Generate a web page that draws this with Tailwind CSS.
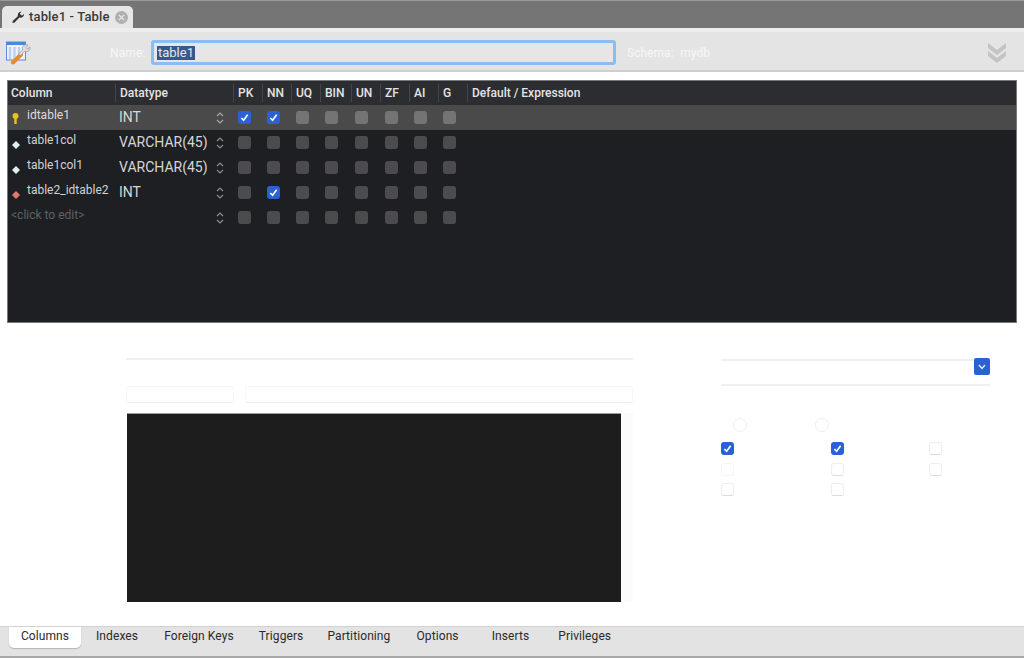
<!DOCTYPE html>
<html lang="en">
<head>
<meta charset="UTF-8">
<title>table1 - Table</title>
<script src="https://cdn.jsdelivr.net/npm/@tailwindcss/browser@4"></script>
</head>
<body class="bg-white font-['Roboto',sans-serif] w-[1024px] h-[658px] overflow-hidden">

<!-- tab bar -->
<div class="h-[28px] bg-[#757575] border-t border-[#9a9a9a] pl-[2px] pt-[5px]">
  <div class="w-[131px] h-[22px] bg-[#e6e6e6] rounded-t-[5px] flex items-center pl-[9px] text-[13px] font-medium tracking-[0.15px] text-[#3a3a3a]">
    <svg class="w-[14px] h-[14px] mr-[4px]" viewBox="0 0 16 16"><path d="M1.5 14.5 L2 12.5 L8 6.8 C7.5 4.5 8.5 2 12 1.6 L10.2 4 L11 5.8 L13 6.4 L15 4.2 C15 7.5 12.2 9.4 9.6 8.6 L3.8 14.6 Z" fill="#333"/></svg>
    <span>table1 - Table</span>
    <span class="ml-[5px] w-[13px] h-[13px] rounded-full bg-[#b0b0b0] flex items-center justify-center">
      <svg class="w-[7px] h-[7px]" viewBox="0 0 8 8"><path d="M1 1 L7 7 M7 1 L1 7" stroke="#e6e6e6" stroke-width="1.6"/></svg>
    </span>
  </div>
</div>

<!-- name toolbar -->
<div class="h-[44px] bg-[#e4e4e4] border-t-[4px] border-t-[#ededed] border-b-2 border-b-[#cfcfcf] pt-[3px] flex items-center relative">
  <svg class="ml-[6px] w-[25px] h-[24px]" viewBox="0 0 25 24">
    <rect x="0.5" y="1" width="19" height="18" fill="#eef2fb" stroke="#5b8ad6"/>
    <rect x="0.5" y="1" width="19" height="3" fill="#4f86dc"/>
    <path d="M4 6 V18 M8.5 6 V18 M13 6 V18" stroke="#bccfef" stroke-width="2.4"/>
    <path d="M7 21.5 L15 13.5" stroke="#ea8a2a" stroke-width="4" stroke-linecap="round"/>
    <path d="M14 15 L18.5 10.5 A4 4 0 0 0 24 6 L21.5 8 L20 6.5 L22 4 A4 4 0 0 0 16.5 9 L12.5 13 Z" fill="#dcdcdc" stroke="#8a8a8a" stroke-width="0.6"/>
  </svg>
  <span class="ml-[79px] w-[36px] text-[12px] tracking-[0.1px] text-[#f7f7f7]">Name:</span>
  <div class="ml-[5px] w-[465px] h-[25px] border-[3px] border-[#8cbdf0] rounded-[3px] bg-[#e6e6e6] flex items-center pl-[3px]">
    <span class="bg-[#35598c] text-[#e4e8ee] text-[13px] leading-[14px] px-[1px]">table1</span>
  </div>
  <span class="ml-[11px] text-[12px] text-[#f7f7f7]">Schema:</span>
  <span class="ml-[7px] text-[12px] text-[#f7f7f7]">mydb</span>
  <svg class="absolute right-[17px] top-[9px] w-[20px] h-[23px]" viewBox="0 0 20 23"><path d="M1 2 L10 9 L19 2 V7 L10 14 L1 7 Z M1 10 L10 17 L19 10 V15 L10 22 L1 15 Z" fill="#c4c4c4"/></svg>
</div>

<!-- columns table -->
<div class="mt-[8px] ml-[7px] w-[1010px] h-[243px] bg-[#1e1f23] border border-[#77787a] text-[#d6d6d6]">
  <div class="h-[24px] bg-[#2c2d30] flex items-center text-[12px] font-medium text-[#e4e4e4]">
    <div class="w-[107px] pl-[3px]">Column</div>
    <div class="w-[118px] pl-[4px] border-l border-[#44454a]">Datatype</div>
    <div class="w-[29px] pl-[4px] border-l border-[#44454a]">PK</div>
    <div class="w-[29px] pl-[4px] border-l border-[#44454a]">NN</div>
    <div class="w-[29px] pl-[4px] border-l border-[#44454a]">UQ</div>
    <div class="w-[31px] pl-[4px] border-l border-[#44454a]">BIN</div>
    <div class="w-[29px] pl-[4px] border-l border-[#44454a]">UN</div>
    <div class="w-[29px] pl-[4px] border-l border-[#44454a]">ZF</div>
    <div class="w-[29px] pl-[4px] border-l border-[#44454a]">AI</div>
    <div class="w-[29px] pl-[4px] border-l border-[#44454a]">G</div>
    <div class="pl-[4px] border-l border-[#44454a]">Default / Expression</div>
  </div>

  <!-- idtable1 -->
  <div class="h-[25px] bg-[#4a4a4a] flex items-center">
    <div class="w-[107px] flex items-center pl-[4px]">
      <svg class="w-[7px] h-[11px] mt-[2px]" viewBox="0 0 7 11"><circle cx="3.5" cy="3" r="3" fill="#e8c31e"/><rect x="2.3" y="4" width="2.4" height="7" fill="#e8c31e"/></svg>
      <span class="ml-[8px] -mt-[5px] text-[12px] text-[#dcdcdc]">idtable1</span>
    </div>
    <div class="w-[118px] flex items-center justify-between pl-[4px] pr-[9px] text-[14px]"><span class="-mt-[1px]">INT</span>
      <svg class="w-[8px] h-[12px]" viewBox="0 0 8 12"><path d="M1 4 L4 1 L7 4 M1 8 L4 11 L7 8" fill="none" stroke="#a8a8a8" stroke-width="1.2"/></svg>
    </div>
    <div class="w-[29px] pl-[5px]"><span class="w-[13px] h-[13px] rounded-[3px] bg-[#2a62d6] flex items-center justify-center"><svg class="w-[9px] h-[9px]" viewBox="0 0 10 10"><path d="M1.5 5.5 L4 8 L8.5 2" fill="none" stroke="#fff" stroke-width="1.8"/></svg></span></div>
    <div class="w-[29px] pl-[5px]"><span class="w-[13px] h-[13px] rounded-[3px] bg-[#2a62d6] flex items-center justify-center"><svg class="w-[9px] h-[9px]" viewBox="0 0 10 10"><path d="M1.5 5.5 L4 8 L8.5 2" fill="none" stroke="#fff" stroke-width="1.8"/></svg></span></div>
    <div class="w-[29px] pl-[5px]"><span class="block w-[13px] h-[13px] rounded-[3px] bg-[#747474]"></span></div>
    <div class="w-[30px] pl-[5px]"><span class="block w-[13px] h-[13px] rounded-[3px] bg-[#747474]"></span></div>
    <div class="w-[29px] pl-[5px]"><span class="block w-[13px] h-[13px] rounded-[3px] bg-[#747474]"></span></div>
    <div class="w-[29px] pl-[6px]"><span class="block w-[13px] h-[13px] rounded-[3px] bg-[#747474]"></span></div>
    <div class="w-[29px] pl-[6px]"><span class="block w-[13px] h-[13px] rounded-[3px] bg-[#747474]"></span></div>
    <div class="w-[29px] pl-[6px]"><span class="block w-[13px] h-[13px] rounded-[3px] bg-[#747474]"></span></div>
  </div>

  <!-- table1col -->
  <div class="h-[25px] flex items-center">
    <div class="w-[107px] flex items-center pl-[4px]">
      <svg class="w-[8px] h-[8px] mt-[4px]" viewBox="0 0 8 8"><path d="M4 0 L8 4 L4 8 L0 4 Z" fill="#dff2f0"/></svg>
      <span class="ml-[7px] -mt-[5px] text-[12px] text-[#d2d2d2]">table1col</span>
    </div>
    <div class="w-[118px] flex items-center justify-between pl-[4px] pr-[9px] text-[14px]"><span class="-mt-[1px]">VARCHAR(45)</span>
      <svg class="w-[8px] h-[12px]" viewBox="0 0 8 12"><path d="M1 4 L4 1 L7 4 M1 8 L4 11 L7 8" fill="none" stroke="#8e8e8e" stroke-width="1.2"/></svg>
    </div>
    <div class="w-[29px] pl-[5px]"><span class="block w-[13px] h-[13px] rounded-[3px] bg-[#4c4c4e]"></span></div>
    <div class="w-[29px] pl-[5px]"><span class="block w-[13px] h-[13px] rounded-[3px] bg-[#4c4c4e]"></span></div>
    <div class="w-[29px] pl-[5px]"><span class="block w-[13px] h-[13px] rounded-[3px] bg-[#4c4c4e]"></span></div>
    <div class="w-[30px] pl-[5px]"><span class="block w-[13px] h-[13px] rounded-[3px] bg-[#4c4c4e]"></span></div>
    <div class="w-[29px] pl-[5px]"><span class="block w-[13px] h-[13px] rounded-[3px] bg-[#4c4c4e]"></span></div>
    <div class="w-[29px] pl-[6px]"><span class="block w-[13px] h-[13px] rounded-[3px] bg-[#4c4c4e]"></span></div>
    <div class="w-[29px] pl-[6px]"><span class="block w-[13px] h-[13px] rounded-[3px] bg-[#4c4c4e]"></span></div>
    <div class="w-[29px] pl-[6px]"><span class="block w-[13px] h-[13px] rounded-[3px] bg-[#4c4c4e]"></span></div>
  </div>

  <!-- table1col1 -->
  <div class="h-[25px] flex items-center">
    <div class="w-[107px] flex items-center pl-[4px]">
      <svg class="w-[8px] h-[8px] mt-[4px]" viewBox="0 0 8 8"><path d="M4 0 L8 4 L4 8 L0 4 Z" fill="#dff2f0"/></svg>
      <span class="ml-[7px] -mt-[5px] text-[12px] text-[#d2d2d2]">table1col1</span>
    </div>
    <div class="w-[118px] flex items-center justify-between pl-[4px] pr-[9px] text-[14px]"><span class="-mt-[1px]">VARCHAR(45)</span>
      <svg class="w-[8px] h-[12px]" viewBox="0 0 8 12"><path d="M1 4 L4 1 L7 4 M1 8 L4 11 L7 8" fill="none" stroke="#8e8e8e" stroke-width="1.2"/></svg>
    </div>
    <div class="w-[29px] pl-[5px]"><span class="block w-[13px] h-[13px] rounded-[3px] bg-[#4c4c4e]"></span></div>
    <div class="w-[29px] pl-[5px]"><span class="block w-[13px] h-[13px] rounded-[3px] bg-[#4c4c4e]"></span></div>
    <div class="w-[29px] pl-[5px]"><span class="block w-[13px] h-[13px] rounded-[3px] bg-[#4c4c4e]"></span></div>
    <div class="w-[30px] pl-[5px]"><span class="block w-[13px] h-[13px] rounded-[3px] bg-[#4c4c4e]"></span></div>
    <div class="w-[29px] pl-[5px]"><span class="block w-[13px] h-[13px] rounded-[3px] bg-[#4c4c4e]"></span></div>
    <div class="w-[29px] pl-[6px]"><span class="block w-[13px] h-[13px] rounded-[3px] bg-[#4c4c4e]"></span></div>
    <div class="w-[29px] pl-[6px]"><span class="block w-[13px] h-[13px] rounded-[3px] bg-[#4c4c4e]"></span></div>
    <div class="w-[29px] pl-[6px]"><span class="block w-[13px] h-[13px] rounded-[3px] bg-[#4c4c4e]"></span></div>
  </div>

  <!-- table2_idtable2 -->
  <div class="h-[25px] flex items-center">
    <div class="w-[107px] flex items-center pl-[4px] whitespace-nowrap">
      <svg class="w-[8px] h-[8px] mt-[4px] shrink-0" viewBox="0 0 8 8"><path d="M4 0 L8 4 L4 8 L0 4 Z" fill="#e07a70"/></svg>
      <span class="ml-[7px] -mt-[5px] text-[12px] text-[#d2d2d2]">table2_idtable2</span>
    </div>
    <div class="w-[118px] flex items-center justify-between pl-[4px] pr-[9px] text-[14px]"><span class="-mt-[1px]">INT</span>
      <svg class="w-[8px] h-[12px]" viewBox="0 0 8 12"><path d="M1 4 L4 1 L7 4 M1 8 L4 11 L7 8" fill="none" stroke="#8e8e8e" stroke-width="1.2"/></svg>
    </div>
    <div class="w-[29px] pl-[5px]"><span class="block w-[13px] h-[13px] rounded-[3px] bg-[#4c4c4e]"></span></div>
    <div class="w-[29px] pl-[5px]"><span class="w-[13px] h-[13px] rounded-[3px] bg-[#2a62d6] flex items-center justify-center"><svg class="w-[9px] h-[9px]" viewBox="0 0 10 10"><path d="M1.5 5.5 L4 8 L8.5 2" fill="none" stroke="#fff" stroke-width="1.8"/></svg></span></div>
    <div class="w-[29px] pl-[5px]"><span class="block w-[13px] h-[13px] rounded-[3px] bg-[#4c4c4e]"></span></div>
    <div class="w-[30px] pl-[5px]"><span class="block w-[13px] h-[13px] rounded-[3px] bg-[#4c4c4e]"></span></div>
    <div class="w-[29px] pl-[5px]"><span class="block w-[13px] h-[13px] rounded-[3px] bg-[#4c4c4e]"></span></div>
    <div class="w-[29px] pl-[6px]"><span class="block w-[13px] h-[13px] rounded-[3px] bg-[#4c4c4e]"></span></div>
    <div class="w-[29px] pl-[6px]"><span class="block w-[13px] h-[13px] rounded-[3px] bg-[#4c4c4e]"></span></div>
    <div class="w-[29px] pl-[6px]"><span class="block w-[13px] h-[13px] rounded-[3px] bg-[#4c4c4e]"></span></div>
  </div>

  <!-- click to edit -->
  <div class="h-[25px] flex items-center">
    <div class="w-[107px] pl-[3px]"><span class="block -mt-[5px] text-[12px] text-[#606060]">&lt;click to edit&gt;</span></div>
    <div class="w-[118px] flex items-center justify-end pr-[9px]">
      <svg class="w-[8px] h-[12px]" viewBox="0 0 8 12"><path d="M1 4 L4 1 L7 4 M1 8 L4 11 L7 8" fill="none" stroke="#8e8e8e" stroke-width="1.2"/></svg>
    </div>
    <div class="w-[29px] pl-[5px]"><span class="block w-[13px] h-[13px] rounded-[3px] bg-[#4c4c4e]"></span></div>
    <div class="w-[29px] pl-[5px]"><span class="block w-[13px] h-[13px] rounded-[3px] bg-[#4c4c4e]"></span></div>
    <div class="w-[29px] pl-[5px]"><span class="block w-[13px] h-[13px] rounded-[3px] bg-[#4c4c4e]"></span></div>
    <div class="w-[30px] pl-[5px]"><span class="block w-[13px] h-[13px] rounded-[3px] bg-[#4c4c4e]"></span></div>
    <div class="w-[29px] pl-[5px]"><span class="block w-[13px] h-[13px] rounded-[3px] bg-[#4c4c4e]"></span></div>
    <div class="w-[29px] pl-[6px]"><span class="block w-[13px] h-[13px] rounded-[3px] bg-[#4c4c4e]"></span></div>
    <div class="w-[29px] pl-[6px]"><span class="block w-[13px] h-[13px] rounded-[3px] bg-[#4c4c4e]"></span></div>
    <div class="w-[29px] pl-[6px]"><span class="block w-[13px] h-[13px] rounded-[3px] bg-[#4c4c4e]"></span></div>
  </div>
</div>

<!-- column details -->
<div class="h-[303px] flex pl-[126px]">
  <div class="w-[507px] pt-[35px]">
    <div class="h-[2px] bg-[#f0f0f0]"></div>
    <div class="mt-[26px] flex gap-[11px]">
      <div class="w-[108px] h-[17px] rounded-[3px] border border-[#f6f6f6] border-b-[#ececec]"></div>
      <div class="flex-1 h-[17px] rounded-[3px] border border-[#f6f6f6] border-b-[#ececec]"></div>
    </div>
    <div class="mt-[10px] h-[189px] flex pl-[1px] bg-[linear-gradient(to_right,#fff_495px,#fbfbfb_495px)]">
      <div class="w-[494px] bg-[#1d1d1d] border-t border-[#9a9a9a]"></div>
    </div>
  </div>

  <div class="ml-[88px] w-[269px] pt-[36px]">
    <div class="flex">
      <div class="w-[253px] h-[27px] border-t-2 border-b-2 border-[#f0f0f0]"></div>
      <div class="-mt-[1px] w-[16px] h-[17px] rounded-[2px] bg-[#2a62d6] flex items-center justify-center">
        <svg class="w-[8px] h-[6px]" viewBox="0 0 8 6"><path d="M1 1 L4 4.5 L7 1" fill="none" stroke="#e6edfb" stroke-width="1.4"/></svg>
      </div>
    </div>
    <div class="-mt-[2px] h-[2px] ml-[253px] w-[16px] bg-[#f0f0f0]"></div>

    <div class="mt-[32px] flex pl-[12px] gap-[68px]">
      <span class="w-[14px] h-[14px] rounded-full border border-[#efefef]"></span>
      <span class="w-[14px] h-[14px] rounded-full border border-[#efefef]"></span>
    </div>
    <div class="mt-[10px] grid grid-cols-[110px_98px_12px] gap-y-[7.5px]">
      <span class="w-[13px] h-[13px] rounded-[3px] bg-[#2a62d6] flex items-center justify-center"><svg class="w-[9px] h-[9px]" viewBox="0 0 10 10"><path d="M1.5 5.5 L4 8 L8.5 2" fill="none" stroke="#fff" stroke-width="1.8"/></svg></span>
      <span class="w-[13px] h-[13px] rounded-[3px] bg-[#2a62d6] flex items-center justify-center"><svg class="w-[9px] h-[9px]" viewBox="0 0 10 10"><path d="M1.5 5.5 L4 8 L8.5 2" fill="none" stroke="#fff" stroke-width="1.8"/></svg></span>
      <span class="w-[13px] h-[13px] rounded-[3px] border border-[#eeeeee] border-b-[#dcdcdc]"></span>
      <span class="w-[13px] h-[13px] rounded-[3px] border border-[#f5f5f5]"></span>
      <span class="w-[13px] h-[13px] rounded-[3px] border border-[#eeeeee] border-b-[#dcdcdc]"></span>
      <span class="w-[13px] h-[13px] rounded-[3px] border border-[#eeeeee] border-b-[#dcdcdc]"></span>
      <span class="w-[13px] h-[13px] rounded-[3px] border border-[#eeeeee] border-b-[#dcdcdc]"></span>
      <span class="w-[13px] h-[13px] rounded-[3px] border border-[#eeeeee] border-b-[#dcdcdc]"></span>
    </div>
  </div>
</div>

<!-- bottom tabs -->
<div class="h-[32px] bg-[#e3e3e3] border-t border-[#d2d2d2] border-b-2 border-b-[#a8a8a8] flex text-[12px] tracking-[0.1px] text-[#2a2a2a]">
  <div class="ml-[9px] w-[72px] h-[21px] pb-[3px] bg-white rounded-b-[5px] shadow-[0_1px_1px_#b5b5b5] flex items-center justify-center">Columns</div>
  <div class="ml-[15px] h-[18px] flex items-center">Indexes</div>
  <div class="ml-[26px] h-[18px] flex items-center">Foreign Keys</div>
  <div class="ml-[25px] h-[18px] flex items-center">Triggers</div>
  <div class="ml-[24px] h-[18px] flex items-center">Partitioning</div>
  <div class="ml-[26px] h-[18px] flex items-center">Options</div>
  <div class="ml-[33px] h-[18px] flex items-center">Inserts</div>
  <div class="ml-[29px] h-[18px] flex items-center">Privileges</div>
</div>
</body>
</html>
